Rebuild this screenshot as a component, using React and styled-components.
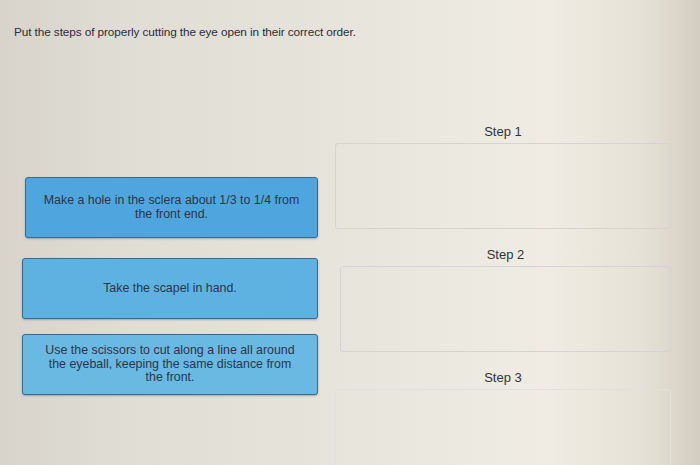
import React from 'react'
import styled, { createGlobalStyle } from 'styled-components'

const GlobalStyle = createGlobalStyle`
  html, body {
    margin: 0;
    padding: 0;
  }
  body {
    font-family: "Liberation Sans", Arial, sans-serif;
    color: #2b2f36;
  }
`

const steps = [
  { text: 'Make a hole in the sclera about 1/3 to 1/4 from the front end.', tone: '#4fa6de', offset: 3, gap: 0 },
  { text: 'Take the scapel in hand.', tone: '#5db2e2', offset: 0, gap: 20 },
  { text: 'Use the scissors to cut along a line all around the eyeball, keeping the same distance from the front.', tone: '#69b9e3', offset: 0, gap: 15 },
]

const slots = ['Step 1', 'Step 2', 'Step 3']

const App = () => {
  return (
    <Page>
      <GlobalStyle />
      <Prompt>Put the steps of properly cutting the eye open in their correct order.</Prompt>
      <Board>
        <Choices>
          {steps.map((s) => (
            <Card key={s.text} $tone={s.tone} $offset={s.offset} $gap={s.gap}>
              {s.text}
            </Card>
          ))}
        </Choices>
        <Targets>
          {slots.map((label, i) => (
            <Slot key={label} $shift={i === 1 ? 5 : 0}>
              <SlotLabel>{label}</SlotLabel>
              <DropZone $faint={i === 2} />
            </Slot>
          ))}
        </Targets>
      </Board>
    </Page>
  )
}

const Page = styled.div`
  width: 700px;
  height: 465px;
  overflow: hidden;
  box-sizing: border-box;
  padding: 25px 0 0 14px;
  background:
    linear-gradient(90deg,
      #d8d4cb 0%,
      #e0ddd4 18%,
      #e5e3da 45%,
      #ece9e0 66%,
      #f0ece3 78%,
      #e6e1d6 92%,
      #d3cdc1 100%);
`

const Prompt = styled.div`
  font-size: 11.8px;
  letter-spacing: -0.1px;
  color: #2c2c3c;
`

const Board = styled.div`
  display: flex;
  gap: 17px;
  margin-top: 85px;
`

const Choices = styled.div`
  width: 296px;
  display: flex;
  flex-direction: column;
  padding-top: 53px;
  padding-left: 8px;
`

const Card = styled.div`
  box-sizing: border-box;
  height: 61px;
  margin-top: ${(p) => p.$gap}px;
  margin-left: ${(p) => p.$offset}px;
  display: flex;
  align-items: center;
  justify-content: center;
  padding: 0 17px;
  text-align: center;
  font-size: 12.4px;
  line-height: 13.5px;
  color: #2b364a;
  background: ${(p) => p.$tone};
  border: 1px solid #3b6a90;
  border-radius: 3px;
  box-shadow: 0 1px 2px rgba(40, 70, 100, 0.35);
`

const Targets = styled.div`
  width: 336px;
  display: flex;
  flex-direction: column;
  gap: 18px;
`

const Slot = styled.div`
  display: flex;
  flex-direction: column;
  align-items: center;
  margin-left: ${(p) => p.$shift}px;
`

const SlotLabel = styled.div`
  font-size: 13px;
  line-height: 15px;
  color: #30333a;
  margin-bottom: 4px;
`

const DropZone = styled.div`
  box-sizing: border-box;
  width: 100%;
  height: 86px;
  border: 1px solid ${(p) => (p.$faint ? '#e2e0dc' : '#d5d3d8')};
  border-radius: 3px;
`

export default App
